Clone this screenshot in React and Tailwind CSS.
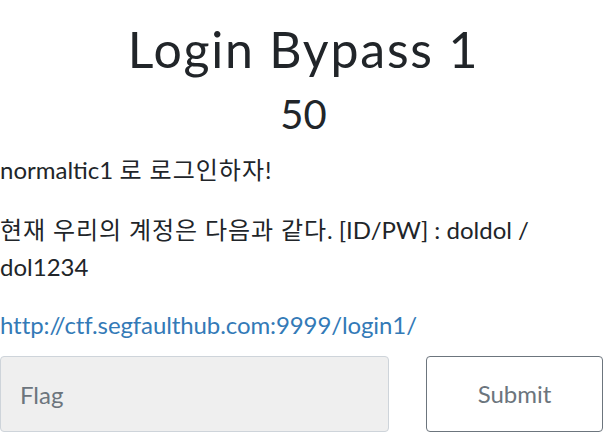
export default function App() {
  return (
    <div className="w-[607px] h-[438px] overflow-hidden bg-white text-[#212529]" style={{ fontFamily: "Lato, 'Noto Sans CJK KR', sans-serif" }}>
      <h2 className="text-center text-[50px] leading-[60px] font-normal pt-[19px] tracking-[1.8px]">Login Bypass 1</h2>
      <h3 className="text-center text-[40px] leading-[48px] font-normal mt-[11px]">50</h3>
      <p className="text-[24px] leading-[36px] mt-[14px]">normaltic1 <span className="tracking-[1px]">로 로그인하자</span>!</p>
      <p className="text-[24px] leading-[37px] mt-[23px]"><span className="tracking-[0.9px]">현재 우리의 계정은 다음과 같다</span>. [ID/PW] : doldol / dol1234</p>
      <p className="text-[24px] leading-[36px] mt-[22px] text-[#337ab7] tracking-[-0.1px]">http://ctf.segfaulthub.com:9999/login1/</p>
      <div className="flex mt-[13px] gap-[37px] w-[603px]">
        <input placeholder="Flag" className="w-[389px] h-[76px] bg-[#efefef] border border-[#ced4da] rounded-[4px] px-[19px] text-[24px] placeholder:text-[#6c757d] outline-none" />
        <button className="flex-1 h-[76px] border border-[#6c757d] rounded-[4px] text-[24px] text-[#6c757d]">Submit</button>
      </div>
    </div>
  );
}
